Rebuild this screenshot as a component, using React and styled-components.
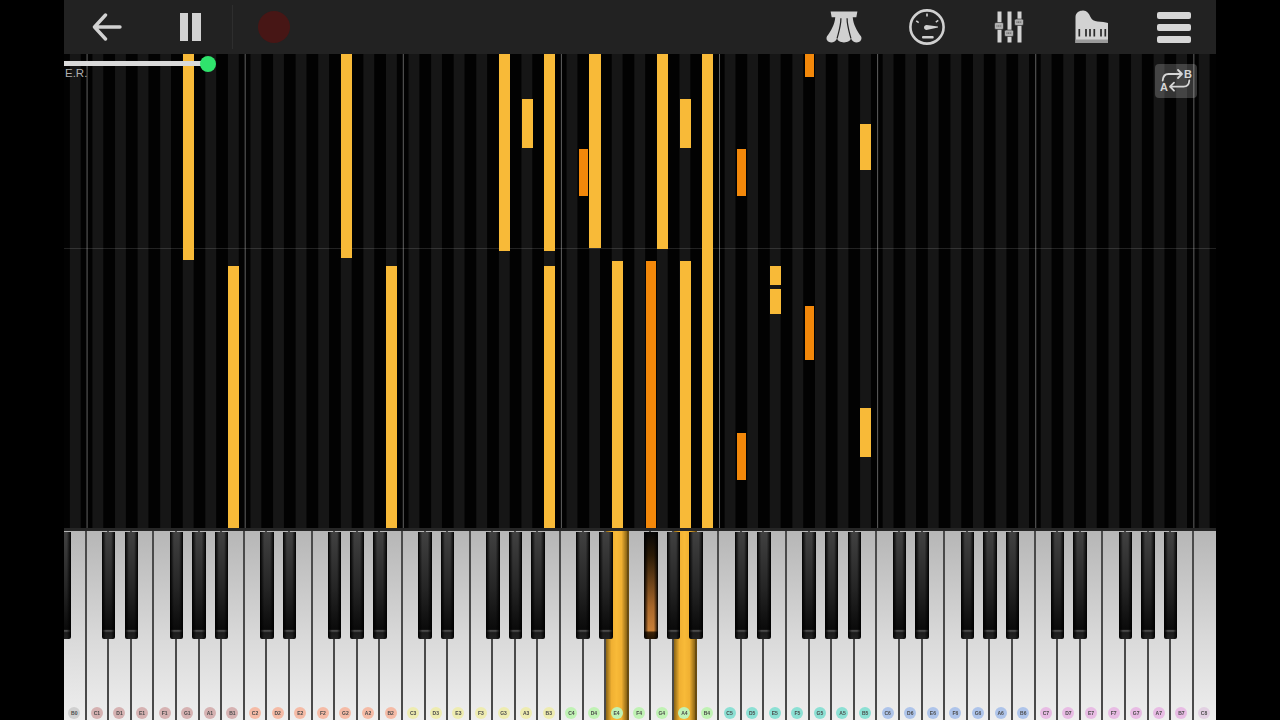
import React from "react";
import styled, { createGlobalStyle } from "styled-components";

const KEY = 1152 / 51;
const Y = "#f8ba38";
const O = "#f3880a";

const Global = createGlobalStyle`
  html, body { margin: 0; padding: 0; background: #000; overflow: hidden; }
  body { font-family: "Liberation Sans", Arial, sans-serif; }
`;

const Screen = styled.div`
  width: 1152px;
  height: 720px;
  margin: 0 auto;
  display: flex;
  flex-direction: column;
  overflow: hidden;
  filter: blur(0.45px);
`;

const TopBar = styled.header`
  height: 54px;
  flex: none;
  background: #222222;
  display: flex;
  align-items: center;
  padding: 0 0.75px 0 1.5px;
`;
const Slot = styled.div`
  width: ${p => p.$w}px;
  height: 54px;
  flex: none;
  display: flex;
  align-items: center;
  justify-content: center;
`;
const Divider = styled.div`
  width: 1px;
  height: 44px;
  flex: none;
  background: #2e2e2e;
`;
const RecordDot = styled.div`
  width: 32px;
  height: 32px;
  border-radius: 50%;
  background: #471615;
`;
const PauseIcon = styled.div`
  display: flex;
  gap: 4px;
`;
const PauseBar = styled.span`
  display: block;
  width: 8.5px;
  height: 28px;
  background: #d2d2d2;
`;
const Spacer = styled.div`
  flex: 1;
`;
const MenuIcon = styled.div`
  width: 34px;
  display: flex;
  flex-direction: column;
  gap: 5px;
`;
const MenuBar = styled.span`
  display: block;
  height: 7px;
  border-radius: 2px;
  background: #d6d6d6;
`;

const Roll = styled.main`
  position: relative;
  height: 474px;
  flex: none;
  overflow: hidden;
  background-color: #000;
  background-image:
    linear-gradient(rgba(255,255,255,0.13), rgba(255,255,255,0.13)),
    linear-gradient(90deg, #606060 1px, transparent 1px),
    linear-gradient(90deg, #020202 25%, #161616 25%, #161616 75%, #020202 75%);
  background-size: 100% 1px, ${KEY * 7}px 100%, ${KEY}px 100%;
  background-position: 0 194px, ${KEY}px 0, 0 0;
  background-repeat: no-repeat, repeat-x, repeat-x;
`;
const Note = styled.div`
  position: absolute;
  left: ${p => p.$x}px;
  top: ${p => p.$top}px;
  width: ${p => p.$w}px;
  height: ${p => p.$h}px;
  background: ${p => p.$c};
`;
const Scrubber = styled.div`
  position: absolute;
  left: 0;
  top: 7px;
  width: 152px;
`;
const Track = styled.div`
  width: 141px;
  height: 5px;
  background: #dadada;
`;
const Knob = styled.div`
  position: absolute;
  right: 0;
  top: -5.5px;
  width: 16px;
  height: 16px;
  border-radius: 50%;
  background: #2fe36c;
`;
const ScrubLabel = styled.div`
  font-size: 11.5px;
  line-height: 13px;
  color: #b0b0b0;
  margin: 1px 0 0 1px;
`;
const LoopButton = styled.div`
  position: absolute;
  left: 1091px;
  top: 10px;
  width: 42px;
  height: 34px;
  border-radius: 4px;
  background: rgba(255,255,255,0.2);
`;
const LoopLetter = styled.text`
  font-family: "Liberation Sans", Arial, sans-serif;
  font-size: 11px;
  font-weight: 700;
  fill: #d6d6d6;
`;

const Keyboard = styled.section`
  height: 192px;
  flex: none;
  display: flex;
  position: relative;
  overflow: hidden;
  border-top: 3px solid #262626;
  box-sizing: border-box;
`;
const WhiteKey = styled.div`
  flex: 1 1 0;
  position: relative;
  box-sizing: border-box;
  border-right: 2px solid ${p => (p.$active ? "#6a4c10" : "#4a4a4a")};
  display: flex;
  justify-content: center;
  align-items: flex-end;
  padding-bottom: 1px;
  background: ${p => p.$active
    ? "linear-gradient(90deg, #8a6414, #f0b032 26%, #f8ba38 50%, #f0b032 74%, #8a6414)"
    : "linear-gradient(180deg, #b6b6b6 0%, #dadada 58%, #eeeeee 100%)"};
  &:last-child { border-right-color: transparent; }
`;
const KeyLabel = styled.span`
  width: 12px;
  height: 12px;
  border-radius: 50%;
  background: ${p => p.$c};
  color: #4a4a4a;
  font-size: 5px;
  font-weight: 700;
  line-height: 12px;
  text-align: center;
`;
const BlackKey = styled.div`
  position: absolute;
  z-index: 2;
  ${p => (p.$left ? "left: -7px;" : "right: -8.25px;")}
  top: 1px;
  width: 13.5px;
  height: 107px;
  border-radius: 0 0 2px 2px;
  background:
    linear-gradient(90deg, #000 0%, transparent 30%, transparent 70%, #000 100%),
    ${p => p.$active
      ? "linear-gradient(180deg, #060606 0%, #2a1a06 22%, #a8672a 70%, #c98038 92%, #3a2208 94%, #241606 100%)"
      : "linear-gradient(180deg, #414141 0%, #232323 55%, #0a0a0a 91%, #4a4a4a 92%, #3a3a3a 93.5%, #1c1c1c 94%, #222 100%)"};
`;

const notes = [
  [183, 11, 54, 260, Y], [228, 11, 266, 528, Y], [341, 11, 54, 258, Y], [386, 11, 266, 528, Y],
  [499, 11, 54, 251, Y], [522, 11, 99, 148, Y], [544, 11, 54, 251, Y], [544, 11, 266, 528, Y],
  [589, 12, 54, 248, Y], [612, 11, 261, 528, Y], [657, 11, 54, 249, Y], [680, 11, 99, 148, Y],
  [680, 11, 261, 528, Y], [702, 11, 54, 528, Y], [770, 11, 266, 285, Y], [770, 11, 289, 314, Y],
  [860, 11, 124, 170, Y], [860, 11, 408, 457, Y],
  [579, 9, 149, 196, O], [646, 10, 261, 528, O], [737, 9, 149, 196, O], [737, 9, 433, 480, O],
  [805, 9, 54, 77, O], [805, 9, 306, 360, O],
];

const octaveColor = ["#d0d0d0", "#d6b2b2", "#f5bba6", "#eeecb0", "#c0f2b4", "#8ce0d4", "#aec4ea", "#e8bce4", "#e2d0e2"];
const letters = ["C", "D", "E", "F", "G", "A", "B"];

const whites = [{ n: "B", o: 0 }];
for (let o = 1; o <= 7; o++) letters.forEach(n => whites.push({ n, o }));
whites.push({ n: "C", o: 8 });

const hasSharp = k => ["C", "D", "F", "G", "A"].includes(k.n) && k.o < 8;

const BackIcon = () => (
  <svg width="30" height="28" viewBox="0 0 30 28" fill="none" stroke="#d2d2d2" strokeWidth="3.4" strokeLinecap="round" strokeLinejoin="round">
    <path d="M28 14H3M13.5 2 2.5 14l11 12" />
  </svg>
);

const PedalIcon = () => (
  <svg width="36" height="32" viewBox="0 0 35 31">
    <path fill="#d0d0d0" d="M4.500.5H30.500L29.500 6H26C26.500 13 30 19 34 24.500C35.500 27.500 33.500 30.500 30 30.500C27.500 30.500 25.500 29.500 24.200 26.500C23.800 29 21 30.500 17.500 30.500C14 30.500 11.200 29 10.800 26.500C9.500 29.500 7.500 30.500 5 30.500C1.500 30.500-.5 27.500 1 24.500C5 19 8.500 13 9 6H5.500Z" />
    <path fill="none" stroke="#222" strokeWidth="1.200" d="M14.500 7C14.500 14 12.500 20 10.800 26.500M20.500 7C20.500 14 22.500 20 24.200 26.500" />
  </svg>
);

const GaugeIcon = () => (
  <svg width="38" height="38" viewBox="0 0 38 38" fill="#d0d0d0">
    <circle cx="19" cy="19" r="16.6" fill="none" stroke="#d0d0d0" strokeWidth="2.6" />
    <rect x="18.200" y="5.500" width="1.600" height="3" />
    <rect x="8" y="13" width="3" height="1.500" transform="rotate(35 9.500 13.700)" />
    <rect x="27.500" y="12.500" width="3" height="1.500" transform="rotate(-35 29 13.200)" />
    <path d="M16 19.500c0-1.500 1.200-2.500 2.500-2.500L30 18.500v1l-11.500 2.500c-1.300 0-2.500-1-2.500-2.500Z" />
    <rect x="14" y="28" width="11.700" height="2.400" rx="1" />
  </svg>
);

const SlidersIcon = () => (
  <svg width="30" height="32" viewBox="0 0 30 32" fill="#d2d2d2">
    <rect x="3.500" y="0.500" width="4" height="31" />
    <rect x="13.500" y="0.500" width="4" height="31" />
    <rect x="23.500" y="0.500" width="4" height="31" />
    <rect x="0.500" y="11.500" width="9" height="7" rx="1.500" fill="#b0b0b0" stroke="#222" strokeWidth=".6" />
    <rect x="10.500" y="19" width="9" height="6.500" rx="1.500" fill="#b0b0b0" stroke="#222" strokeWidth=".6" />
    <rect x="20.500" y="8" width="9" height="6.500" rx="1.500" fill="#b0b0b0" stroke="#222" strokeWidth=".6" />
    <path d="M2.500 15h5M12.500 22.200h5M22.500 11.200h5" stroke="#555" strokeWidth="1.200" strokeDasharray="1 .6" />
  </svg>
);

const PianoIcon = () => (
  <svg width="34" height="34" viewBox="0 0 34 34" fill="#d2d2d2">
    <path d="M.500 33V7C.500 3 4 .500 8 .500c4 0 6 3 7.500 6.500 1.500 3 3.500 4 7 4.500 4 .500 8 .500 10.500 1.500V33Z" />
    <path d="M.500 29.500h32.500V33H.500Z" fill="#9a9a9a" />
    <path d="M4.300 19v7.500M11 19v7.500M15 19v7.500M19.300 19v7.500M26 19v7.500M30.300 19v7.500" stroke="#2a2a2a" strokeWidth="1.700" />
  </svg>
);

const LoopIcon = () => (
  <svg width="42" height="34" viewBox="0 0 42 34" fill="none" stroke="#d6d6d6" strokeWidth="1.800" strokeLinecap="round" strokeLinejoin="round">
    <path d="M7.700 16.500C8 12.500 10 10 13.500 10H26.500M23 6l4 4-4 4" />
    <path d="M34.300 16.500C34 20.500 32 22.700 28.500 22.700H15M19 18.700l-4 4 4 4" />
    <LoopLetter x="29" y="14" stroke="none">B</LoopLetter>
    <LoopLetter x="5" y="27" stroke="none">A</LoopLetter>
  </svg>
);

export default function App() {
  return (
    <>
      <Global />
      <Screen>
        <TopBar>
          <Slot $w={83}><BackIcon /></Slot>
          <Slot $w={83}>
            <PauseIcon><PauseBar /><PauseBar /></PauseIcon>
          </Slot>
          <Divider />
          <Slot $w={83}><RecordDot /></Slot>
          <Spacer />
          <Slot $w={82.5}><PedalIcon /></Slot>
          <Slot $w={82.5}><GaugeIcon /></Slot>
          <Slot $w={82.5}><SlidersIcon /></Slot>
          <Slot $w={82.5}><PianoIcon /></Slot>
          <Slot $w={82.5}>
            <MenuIcon><MenuBar /><MenuBar /><MenuBar /></MenuIcon>
          </Slot>
        </TopBar>

        <Roll>
          {notes.map(([x, w, a, b, c], i) => (
            <Note key={i} $x={x - 64} $w={w} $top={a - 54} $h={b - a} $c={c} />
          ))}
          <Scrubber>
            <Track />
            <Knob />
            <ScrubLabel>E.R.</ScrubLabel>
          </Scrubber>
          <LoopButton><LoopIcon /></LoopButton>
        </Roll>

        <Keyboard>
          {whites.map((k, i) => {
            const name = k.n + k.o;
            return (
              <WhiteKey key={name} $active={name === "E4" || name === "A4"}>
                {i === 0 && <BlackKey $left />}
                {hasSharp(k) && <BlackKey $active={name === "F4"} />}
                <KeyLabel $c={octaveColor[k.o]}>{name}</KeyLabel>
              </WhiteKey>
            );
          })}
        </Keyboard>
      </Screen>
    </>
  );
}
